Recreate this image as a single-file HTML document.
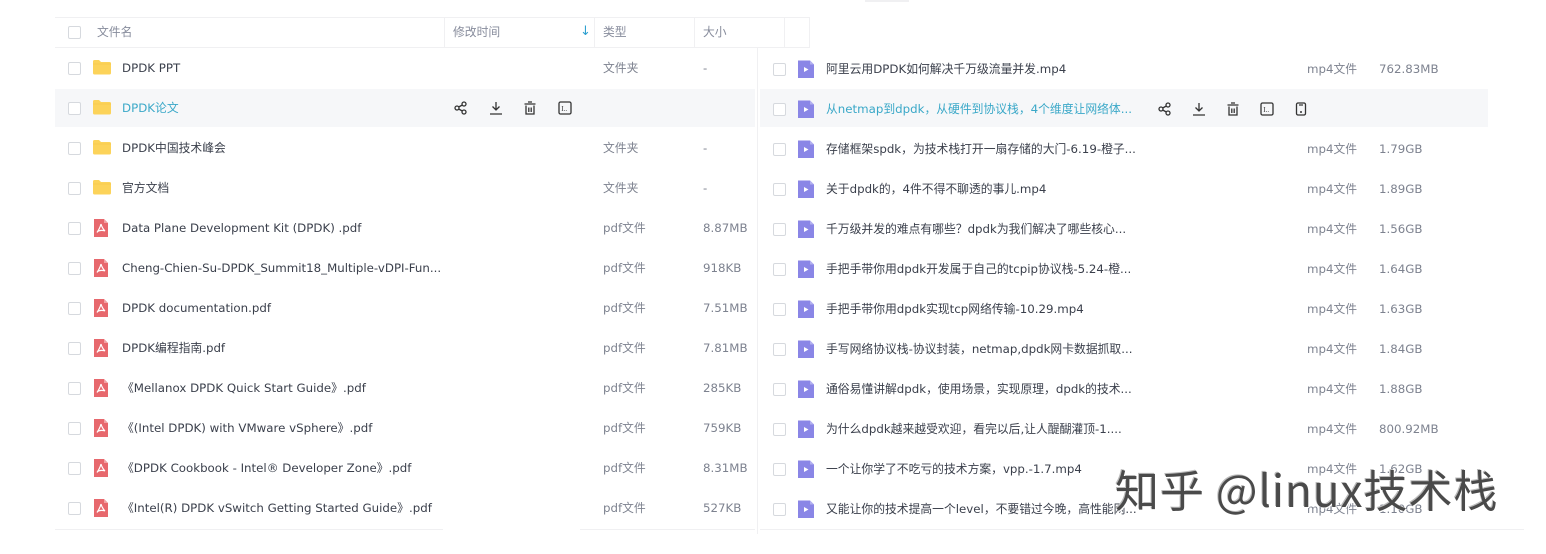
<!DOCTYPE html>
<html><head><meta charset="utf-8"><style>
*{margin:0;padding:0;box-sizing:border-box}
body{width:1546px;height:554px;background:#fff;position:relative;overflow:hidden;font-family:"DejaVu Sans","Noto Sans CJK SC",sans-serif;font-size:11.8px;color:#3a3f4b}
.a{position:absolute;white-space:nowrap;line-height:16px}
.cb{position:absolute;width:13px;height:13px;border:1px solid #d6d9de;border-radius:2px;background:#fff}
.hd{color:#878c9c}
.line{position:absolute;height:1px;background:#f0f0f2}
.vl{position:absolute;width:1px;background:#f0f0f2}
.g{color:#7d828f}
.blue{color:#3aa8c8}
svg.i{position:absolute}
</style></head><body>
<div class="line" style="left:55px;top:17px;width:755px"></div>
<div class="line" style="left:55px;top:47px;width:755px"></div>
<div class="vl" style="left:444px;top:17px;height:30px"></div>
<div class="vl" style="left:594px;top:17px;height:30px"></div>
<div class="vl" style="left:694px;top:17px;height:30px"></div>
<div class="vl" style="left:784px;top:17px;height:30px"></div>
<div class="vl" style="left:809px;top:17px;height:30px"></div>
<div class="line" style="left:865px;top:0;width:44px;height:2px"></div>
<div class="cb" style="left:68px;top:26px"></div>
<div class="a hd" style="left:97px;top:24px">文件名</div>
<div class="a hd" style="left:453px;top:24px">修改时间</div>
<div class="a" style="left:580px;top:24px;color:#2ea0d0;font-size:13px">&#8595;</div>
<div class="a hd" style="left:603px;top:24px">类型</div>
<div class="a hd" style="left:703px;top:24px">大小</div>
<div style="position:absolute;left:55px;top:89px;width:700px;height:38px;background:#f6f7f9"></div>
<div style="position:absolute;left:760px;top:89px;width:728px;height:38px;background:#f6f7f9"></div>
<div class="vl" style="left:757px;top:48px;height:486px"></div>
<div class="line" style="left:55px;top:529px;width:388px"></div>
<div class="line" style="left:580px;top:529px;width:175px"></div>
<div class="line" style="left:760px;top:529px;width:390px"></div>
<div class="line" style="left:1110px;top:529px;width:414px"></div>

<div id="L"></div>

<svg width="0" height="0" style="position:absolute"><defs>
<symbol id="fold" viewBox="0 0 20 16"><path d="M1 2.5Q1 1 2.5 1H7l2 2H17.5Q19 3 19 4.5V14Q19 15.5 17.5 15.5H2.5Q1 15.5 1 14Z" fill="#fcd35a"/><path d="M1 5H19" stroke="#f5c443" stroke-width="0.6"/></symbol>
<symbol id="pdf" viewBox="0 0 16 20"><path d="M1 1H11L15 5V19H1Z" fill="#e7686d"/><path d="M11 1V5H15Z" fill="#f2a3a6"/><path d="M8 6Q7 10 4 14.5M8 6Q9 10 12 13M4.5 13.5Q8 11.5 12 13" stroke="#fff" stroke-width="1.2" fill="none"/></symbol>
<symbol id="vid" viewBox="0 0 18 20"><path d="M1 1.5H13L17 5.5V19H1Z" fill="#8a86e6"/><path d="M13 1.5V5.5H17Z" fill="#b3b0f0"/><path d="M7 8L11.5 10.5L7 13Z" fill="#fff"/></symbol>
<symbol id="share" viewBox="0 0 14 14"><g fill="none" stroke="#333" stroke-width="1.3"><circle cx="10" cy="3" r="2"/><circle cx="3" cy="7" r="2"/><circle cx="10" cy="11" r="2"/><path d="M4.7 6L8.3 4M4.7 8L8.3 10"/></g></symbol>
<symbol id="dl" viewBox="0 0 14 14"><g fill="none" stroke="#333" stroke-width="1.3"><path d="M7 1V9M3.5 5.5L7 9L10.5 5.5M1 13H13"/></g></symbol>
<symbol id="del" viewBox="0 0 14 14"><g fill="none" stroke="#333" stroke-width="1.3"><path d="M1.5 3H12.5M5 1H9M3 4.5V13H11V4.5M5.8 6.5V11M8.2 6.5V11"/></g></symbol>
<symbol id="ren" viewBox="0 0 14 14"><rect x="1" y="1" width="12" height="12" rx="1.5" fill="none" stroke="#333" stroke-width="1.3"/><text x="3.3" y="10" font-size="7" font-family="Liberation Serif,serif" fill="#333">I..</text></symbol>
<symbol id="ph" viewBox="0 0 14 14"><rect x="2.5" y="1" width="9" height="12" rx="1.5" fill="none" stroke="#333" stroke-width="1.3"/><path d="M5 3H9" stroke="#333" stroke-width="1.2"/><circle cx="7" cy="10" r="1" fill="#333"/></symbol>
</defs></svg>

<div class="a" style="left:1115px;top:462px;font-size:44px;line-height:52px;color:#4a4a4a;text-shadow:1px 1px 0 #fff,-1px -1px 0 #bbb;font-family:'Noto Sans CJK SC','Liberation Sans',sans-serif;letter-spacing:1px">知乎 @linux技术栈</div>

<script>
var L=[["fold","DPDK  PPT","文件夹","-"],["fold","DPDK论文","",""],["fold","DPDK中国技术峰会","文件夹","-"],["fold","官方文档","文件夹","-"],
["pdf","Data Plane Development Kit (DPDK) .pdf","pdf文件","8.87MB"],["pdf","Cheng-Chien-Su-DPDK_Summit18_Multiple-vDPI-Fun...","pdf文件","918KB"],
["pdf","DPDK documentation.pdf","pdf文件","7.51MB"],["pdf","DPDK编程指南.pdf","pdf文件","7.81MB"],["pdf","《Mellanox DPDK Quick Start Guide》.pdf","pdf文件","285KB"],
["pdf","《(Intel DPDK) with VMware vSphere》.pdf","pdf文件","759KB"],["pdf","《DPDK Cookbook - Intel® Developer Zone》.pdf","pdf文件","8.31MB"],
["pdf","《Intel(R) DPDK vSwitch Getting Started Guide》.pdf","pdf文件","527KB"]];
var R=[["阿里云用DPDK如何解决千万级流量并发.mp4","762.83MB"],["从netmap到dpdk，从硬件到协议栈，4个维度让网络体...",""],["存储框架spdk，为技术栈打开一扇存储的大门-6.19-橙子...","1.79GB"],
["关于dpdk的，4件不得不聊透的事儿.mp4","1.89GB"],["千万级并发的难点有哪些？dpdk为我们解决了哪些核心...","1.56GB"],["手把手带你用dpdk开发属于自己的tcpip协议栈-5.24-橙...","1.64GB"],
["手把手带你用dpdk实现tcp网络传输-10.29.mp4","1.63GB"],["手写网络协议栈-协议封装，netmap,dpdk网卡数据抓取...","1.84GB"],["通俗易懂讲解dpdk，使用场景，实现原理，dpdk的技术...","1.88GB"],
["为什么dpdk越来越受欢迎，看完以后,让人醍醐灌顶-1....","800.92MB"],["一个让你学了不吃亏的技术方案，vpp.-1.7.mp4","1.62GB"],["又能让你的技术提高一个level，不要错过今晚，高性能网...","1.10GB"]];
var h="";
function ic(id,x,y,w,hh){return '<svg class="i" style="left:'+x+'px;top:'+y+'px" width="'+w+'" height="'+hh+'"><use href="#'+id+'"/></svg>';}
L.forEach(function(r,i){var c=68+i*40;
h+='<div class="cb" style="left:68px;top:'+(c-6)+'px"></div>';
h+=r[0]=="fold"?ic("fold",92,c-9,20,16):ic("pdf",93,c-10,16,20);
h+='<div class="a'+(i==1?' blue':'')+'" style="left:122px;top:'+(c-8)+'px">'+r[1]+'</div>';
h+='<div class="a g" style="left:603px;top:'+(c-8)+'px">'+r[2]+'</div><div class="a g" style="left:703px;top:'+(c-8)+'px">'+r[3]+'</div>';});
["share","dl","del","ren"].forEach(function(k,j){h+=ic(k,454+j*34.5,101,14,14);});
R.forEach(function(r,i){var c=69+i*40;
h+='<div class="cb" style="left:773px;top:'+(c-6)+'px"></div>'+ic("vid",797,c-10,18,20);
h+='<div class="a'+(i==1?' blue':'')+'" style="left:826px;top:'+(c-8)+'px">'+r[0]+'</div>';
if(r[1])h+='<div class="a g" style="left:1307px;top:'+(c-8)+'px">mp4文件</div><div class="a g" style="left:1379px;top:'+(c-8)+'px">'+r[1]+'</div>';});
["share","dl","del","ren","ph"].forEach(function(k,j){h+=ic(k,1158+j*34,102,14,14);});
document.getElementById("L").innerHTML=h;
</script>
</body></html>
